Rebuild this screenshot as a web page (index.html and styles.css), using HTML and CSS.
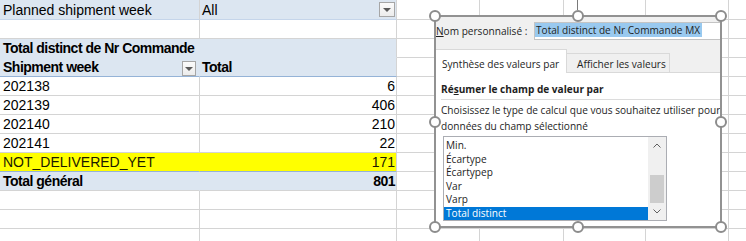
FILE: index.html
```html
<!DOCTYPE html>
<html lang="fr">
<head>
    <meta charset="UTF-8">
    <title>Tableau croisé - Total distinct</title>
    <link rel="stylesheet" href="styles.css">
</head>
<body>
    <div class="sheet">
        <div class="grid">
            <!-- Row 1: report filter -->
            <div class="cell filter">Planned shipment week</div>
            <div class="cell filter col-b">All<span class="drop"></span></div>
            <div class="cell"></div><div class="cell"></div><div class="cell"></div><div class="cell"></div><div class="cell"></div>

            <!-- Row 2 -->
            <div class="cell"></div><div class="cell col-b"></div>
            <div class="cell"></div><div class="cell"></div><div class="cell"></div><div class="cell"></div><div class="cell"></div>

            <!-- Row 3: pivot header -->
            <div class="cell head head-a bold">Total distinct de Nr Commande</div>
            <div class="cell head col-b"></div>
            <div class="cell"></div><div class="cell"></div><div class="cell"></div><div class="cell"></div><div class="cell"></div>

            <!-- Row 4: field labels -->
            <div class="cell head head-a head-last bold">Shipment week<span class="drop drop-low"></span></div>
            <div class="cell head head-last col-b bold">Total</div>
            <div class="cell"></div><div class="cell"></div><div class="cell"></div><div class="cell"></div><div class="cell"></div>

            <!-- Data rows -->
            <div class="cell">202138</div><div class="cell col-b num">6</div>
            <div class="cell"></div><div class="cell"></div><div class="cell"></div><div class="cell"></div><div class="cell"></div>

            <div class="cell">202139</div><div class="cell col-b num">406</div>
            <div class="cell"></div><div class="cell"></div><div class="cell"></div><div class="cell"></div><div class="cell"></div>

            <div class="cell">202140</div><div class="cell col-b num">210</div>
            <div class="cell"></div><div class="cell"></div><div class="cell"></div><div class="cell"></div><div class="cell"></div>

            <div class="cell">202141</div><div class="cell col-b num">22</div>
            <div class="cell"></div><div class="cell"></div><div class="cell"></div><div class="cell"></div><div class="cell"></div>

            <div class="cell marked marked-a">NOT_DELIVERED_YET</div><div class="cell marked col-b num">171</div>
            <div class="cell"></div><div class="cell"></div><div class="cell"></div><div class="cell"></div><div class="cell"></div>

            <!-- Grand total -->
            <div class="cell total total-a bold">Total général</div><div class="cell total col-b num bold">801</div>
            <div class="cell"></div><div class="cell"></div><div class="cell"></div><div class="cell"></div><div class="cell"></div>

            <!-- Empty rows -->
            <div class="cell"></div><div class="cell col-b"></div>
            <div class="cell"></div><div class="cell"></div><div class="cell"></div><div class="cell"></div><div class="cell"></div>

            <div class="cell"></div><div class="cell col-b"></div>
            <div class="cell"></div><div class="cell"></div><div class="cell"></div><div class="cell"></div><div class="cell"></div>

            <div class="cell"></div><div class="cell col-b"></div>
            <div class="cell"></div><div class="cell"></div><div class="cell"></div><div class="cell"></div><div class="cell"></div>
        </div>

        <!-- Pasted picture of the value field settings dialog -->
        <div class="picture">
            <div class="shot">
                <div class="name-row">
                    <span class="name-label"><u>N</u>om personnalisé :</span>
                    <div class="name-input"><span class="sel">Total distinct de Nr Commande MX</span></div>
                </div>
                <div class="tabs">
                    <div class="tab active">Synthèse des valeurs par</div>
                    <div class="tab">Afficher les valeurs</div>
                </div>
                <div class="panel">
                    <div class="group-title">Ré<u>s</u>umer le champ de valeur par</div>
                    <p class="hint">Choisissez le type de calcul que vous souhaitez utiliser pour<br>données du champ sélectionné</p>
                    <div class="listbox">
                        <ul class="items">
                            <li>Min.</li>
                            <li>Écartype</li>
                            <li>Écartypep</li>
                            <li>Var</li>
                            <li>Varp</li>
                            <li class="selected">Total distinct</li>
                        </ul>
                        <div class="scrollbar">
                            <div class="sb-btn">
                                <svg width="8" height="5" viewBox="0 0 8 5"><polyline points="0.5,4.5 4,1 7.5,4.5" fill="none" stroke="#606060" stroke-width="1"/></svg>
                            </div>
                            <div class="sb-track"><div class="thumb"></div></div>
                            <div class="sb-btn">
                                <svg width="8" height="5" viewBox="0 0 8 5"><polyline points="0.5,0.5 4,4 7.5,0.5" fill="none" stroke="#606060" stroke-width="1"/></svg>
                            </div>
                        </div>
                    </div>
                </div>
            </div>

            <span class="rotate-line"></span>
            <span class="handle h-tl"></span>
            <span class="handle h-tc"></span>
            <span class="handle h-tr"></span>
            <span class="handle h-ml"></span>
            <span class="handle h-mr"></span>
            <span class="handle h-bl"></span>
            <span class="handle h-bc"></span>
            <span class="handle h-br"></span>
        </div>
    </div>
</body>
</html>
```

FILE: styles.css
```css
/* General */
body {
    margin: 0;
    background-color: #fff;
    font-family: "Liberation Sans", Arial, sans-serif;
    color: #000;
}

.sheet {
    position: relative;
    width: 746px;
    height: 241px;
    overflow: hidden;
}

/* Worksheet grid */
.grid {
    display: grid;
    grid-template-columns: 200px 197px 83px 84px 82px 83px 100px;
    grid-template-rows: 20px;
    grid-auto-rows: 19px;
    font-size: 14px;
}

.cell {
    box-sizing: border-box;
    display: flex;
    align-items: center;
    padding: 0 2px 0 3px;
    line-height: 18px;
    white-space: nowrap;
    overflow: hidden;
    border-right: 1px solid #d4d4d4;
    border-bottom: 1px solid #d4d4d4;
}

.col-b {
    padding-left: 2px;
    padding-right: 1px;
}

.num {
    justify-content: flex-end;
}

.bold {
    font-weight: bold;
    letter-spacing: -0.5px;
}

/* Pivot table styling */
.filter {
    background-color: #dce6f1;
    border-bottom-color: #c5d5ea;
}

.head {
    background-color: #dce6f1;
    border-bottom-color: #dce6f1;
}

.head-a {
    border-right-color: #dce6f1;
}

.head-last {
    border-bottom-color: #95b3d7;
}

.marked {
    background-color: #ffff00;
    color: #1a1a00;
    border-bottom-color: #95b3d7;
}

.marked-a {
    border-right-color: #ffff00;
}

.total {
    background-color: #dce6f1;
}

.total-a {
    border-right-color: #dce6f1;
}

/* Filter dropdown button */
.drop {
    flex: none;
    box-sizing: border-box;
    width: 16px;
    height: 15px;
    margin-left: auto;
    border: 1px solid #a6a6a6;
    background: linear-gradient(#fbfbfb, #ececec);
    display: flex;
    align-items: center;
    justify-content: center;
}

.drop::after {
    content: "";
    margin-top: 1px;
    border-left: 4px solid transparent;
    border-right: 4px solid transparent;
    border-top: 4px solid #5a5a5a;
}

.drop-low {
    width: 14px;
    align-self: flex-end;
    margin-right: 1px;
}

/* Picture with selection frame */
.picture {
    position: absolute;
    left: 434px;
    top: 15px;
    width: 288px;
    height: 213px;
    box-sizing: border-box;
    border: 2px solid #929292;
}

.shot {
    display: flex;
    flex-direction: column;
    width: 100%;
    height: 100%;
    overflow: hidden;
    background-color: #f0f0f0;
    font-family: "Open Sans", "Noto Sans", sans-serif;
    font-size: 10.1px;
    color: #1e1e1e;
}

.name-row {
    display: flex;
    flex: none;
    height: 32px;
    box-sizing: border-box;
    padding-top: 5px;
}

.name-label {
    flex: none;
    width: 98px;
    line-height: 18px;
}

.name-input {
    flex: none;
    box-sizing: border-box;
    width: 300px;
    height: 18px;
    border: 1px solid #c4c4c4;
    background-color: #fff;
    line-height: 14px;
}

.name-input .sel {
    display: inline-block;
    padding: 0 2px 0 1px;
    background-color: #99c9ef;
}

.tabs {
    display: flex;
    flex: none;
    align-items: flex-end;
    height: 24px;
    box-sizing: border-box;
    border-bottom: 1px solid #d9d9d9;
}

.tab {
    box-sizing: border-box;
    width: 104px;
    height: 19px;
    margin-left: -1px;
    padding: 2px 0 0 10px;
    line-height: 16px;
    border: 1px solid #d9d9d9;
    border-bottom: none;
    white-space: nowrap;
}

.tab.active {
    width: 132px;
    height: 24px;
    margin-bottom: -1px;
    padding: 6px 0 0 6px;
    background-color: #fff;
}

.panel {
    flex: 1;
    padding-left: 5px;
    background-color: #fff;
}

.group-title {
    padding-top: 7px;
    line-height: 19px;
    font-weight: bold;
    white-space: nowrap;
    border-bottom: 1px solid #dcdcdc;
}

.hint {
    margin: 2px 0 0;
    line-height: 16px;
    white-space: nowrap;
}

.listbox {
    display: flex;
    box-sizing: border-box;
    width: 224px;
    height: 85px;
    margin: 2px 0 0 2px;
    border: 1px solid #abadb3;
}

.items {
    flex: 1;
    display: flex;
    flex-direction: column;
    justify-content: flex-end;
    margin: 0;
    padding: 0;
    list-style: none;
    overflow: hidden;
}

.items li {
    flex: none;
    height: 13.5px;
    line-height: 13.5px;
    padding-left: 2px;
}

.items li.selected {
    background-color: #0078d7;
    color: #fff;
}

.scrollbar {
    flex: none;
    display: flex;
    flex-direction: column;
    width: 18px;
    background-color: #f0f0f0;
}

.sb-btn {
    flex: none;
    height: 17px;
    display: flex;
    align-items: center;
    justify-content: center;
}

.sb-track {
    flex: 1;
    display: flex;
    flex-direction: column;
    justify-content: flex-end;
}

.thumb {
    height: 28px;
    margin: 0 2px;
    background-color: #cdcdcd;
}

/* Selection handles */
.rotate-line {
    position: absolute;
    left: calc(50% - 1px);
    top: -17px;
    width: 1px;
    height: 10px;
    background-color: #7a7a7a;
}

.handle {
    position: absolute;
    box-sizing: border-box;
    width: 12px;
    height: 12px;
    border: 2px solid #8c8c8c;
    border-radius: 50%;
    background-color: #fff;
}

.h-tl { left: -7px; top: -7px; }
.h-tc { left: calc(50% - 6px); top: -7px; }
.h-tr { right: -7px; top: -7px; }
.h-ml { left: -7px; top: calc(50% - 6px); }
.h-mr { right: -7px; top: calc(50% - 6px); }
.h-bl { left: -7px; bottom: -7px; }
.h-bc { left: calc(50% - 6px); bottom: -7px; }
.h-br { right: -7px; bottom: -7px; }
```
